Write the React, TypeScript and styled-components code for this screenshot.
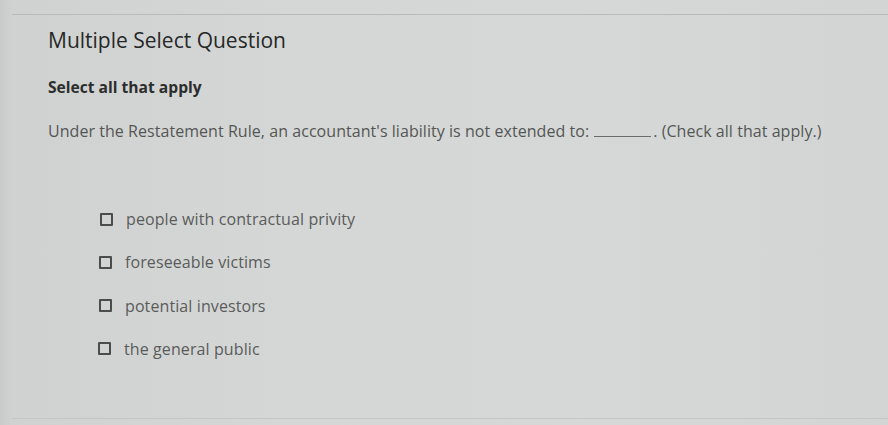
import React from "react";
import styled, { createGlobalStyle } from "styled-components";

const Global = createGlobalStyle`
  html, body { margin: 0; padding: 0; }
  body {
    width: 888px; height: 425px; overflow: hidden;
    background: linear-gradient(90deg, #c9cbca 0px, #d0d2d1 12px, #d5d7d6 300px, #d6d8d7 600px, #d3d5d4 888px);
    font-family: "Open Sans", Lato, sans-serif;
  }
`;

const Frame = styled.div`
  height: 425px;
  padding: 14px 0 0 12px;
  box-sizing: border-box;
`;

const Card = styled.section`
  border-top: 1px solid #b9bbba;
  padding: 12px 0 0 36px;
  height: 405px;
  box-sizing: border-box;
  border-bottom: 1px solid #c4c6c5;
`;

const Title = styled.h1`
  margin: 0;
  font-size: 21px;
  font-weight: 400;
  color: #262827;
  line-height: 26px;
`;

const Prompt = styled.h2`
  margin: 24px 0 0;
  font-size: 15.6px;
  font-weight: 700;
  color: #2c2e2d;
  line-height: 20px;
`;

const Question = styled.p`
  margin: 24px 0 0;
  font-size: 16px;
  letter-spacing: 0.05px;
  color: #545655;
  line-height: 20px;
`;

const Blank = styled.span`
  display: inline-block;
  width: 57px;
  margin: 0 2px 0 5px;
  border-bottom: 1px solid #6a6c6b;
  vertical-align: baseline;
  height: 14px;
`;

const Options = styled.ul`
  list-style: none;
  margin: 68px 0 0 52px;
  padding: 0;
  display: flex;
  flex-direction: column;
  gap: 23.3px;
`;

const Option = styled.li<{ $shift: number }>`
  display: flex;
  align-items: center;
  gap: 13px;
  height: 20px;
  margin-left: ${(p) => p.$shift}px;
  font-size: 16px;
  letter-spacing: 0.1px;
  color: #5a5c5b;
`;

const Box = styled.span`
  width: 9px;
  height: 9px;
  border: 2px solid #4a4d4c;
  border-radius: 1px;
  flex: none;
`;

const items = [
  { t: "people with contractual privity", s: 0 },
  { t: "foreseeable victims", s: -1 },
  { t: "potential investors", s: -1 },
  { t: "the general public", s: -2 },
];

export default function App() {
  return (
    <>
      <Global />
      <Frame>
        <Card>
          <Title>Multiple Select Question</Title>
          <Prompt>Select all that apply</Prompt>
          <Question>
            Under the Restatement Rule, an accountant's liability is not extended to:
            <Blank />. (Check all that apply.)
          </Question>
          <Options>
            {items.map((i) => (
              <Option key={i.t} $shift={i.s}>
                <Box />
                {i.t}
              </Option>
            ))}
          </Options>
        </Card>
      </Frame>
    </>
  );
}
